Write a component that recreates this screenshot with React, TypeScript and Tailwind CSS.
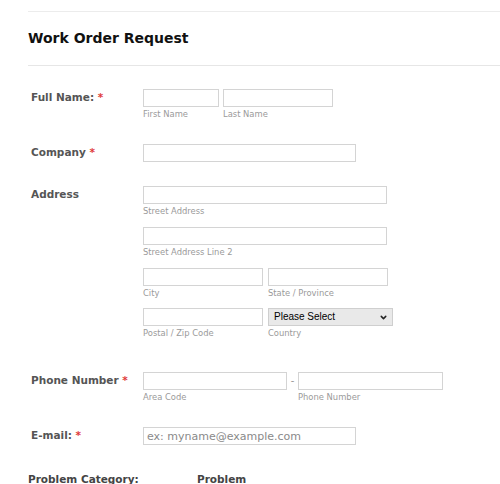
import { ChevronDown } from 'lucide-react'

const font = { fontFamily: '"DejaVu Sans", sans-serif' }

function Field({ w, placeholder }: { w: string; placeholder?: string }) {
  return (
    <input
      type="text"
      placeholder={placeholder}
      className={`block ${w} h-[18px] border border-[#d4d4d4] bg-white px-[3px] text-[11px] leading-[16px] text-[#333] placeholder:text-[#8a8a8a] outline-none`}
    />
  )
}

function Sub({ children }: { children: React.ReactNode }) {
  return <div className="mt-[1px] text-[8.4px] leading-[12px] text-[#9a9a9a]">{children}</div>
}

function Label({ text, required }: { text: string; required?: boolean }) {
  return (
    <div className="w-[115px] shrink-0 pl-[3px] pt-[1px] text-[10.5px] font-bold leading-[14px] text-[#555]">
      {text}
      {required && <span className="text-[#e03b3b]"> *</span>}
    </div>
  )
}

export default function App() {
  return (
    <div className="min-h-screen bg-white pl-[28px] text-[12px] leading-[16px]" style={font}>
      <div className="pt-[11px]">
        <div className="border-t border-[#ececec]" />
        <h1 className="h-[53px] pt-[16px] text-[14px] font-bold leading-[20px] text-[#111]">
          Work Order Request
        </h1>
        <div className="border-t border-[#e6e6e6]" />
      </div>

      {/* Full name */}
      <div className="mt-[23px] flex">
        <Label text="Full Name:" required />
        <div className="flex gap-[4px]">
          <div>
            <Field w="w-[76px]" />
            <Sub>First Name</Sub>
          </div>
          <div>
            <Field w="w-[110px]" />
            <Sub>Last Name</Sub>
          </div>
        </div>
      </div>

      {/* Company */}
      <div className="mt-[24px] flex">
        <Label text="Company" required />
        <Field w="w-[213px]" />
      </div>

      {/* Address */}
      <div className="mt-[24px] flex">
        <Label text="Address" />
        <div className="flex flex-col gap-[10px]">
          <div>
            <Field w="w-[244px]" />
            <Sub>Street Address</Sub>
          </div>
          <div>
            <Field w="w-[244px]" />
            <Sub>Street Address Line 2</Sub>
          </div>
          <div className="flex gap-[5px]">
            <div>
              <Field w="w-[120px]" />
              <Sub>City</Sub>
            </div>
            <div>
              <Field w="w-[120px]" />
              <Sub>State / Province</Sub>
            </div>
          </div>
          <div className="-mt-[1px] flex gap-[5px]">
            <div>
              <Field w="w-[120px]" />
              <Sub>Postal / Zip Code</Sub>
            </div>
            <div>
              <div className="relative h-[18px] w-[125px] border border-[#cfcfcf] bg-[#e9e9e9]">
                <select
                  className="block h-[16px] w-full appearance-none bg-transparent py-0 pl-[5px] text-[10px] leading-[16px] text-black outline-none"
                  style={{ fontFamily: '"Liberation Sans", Arial, sans-serif' }}
                >
                  <option>Please Select</option>
                </select>
                <ChevronDown
                  className="pointer-events-none absolute right-[4px] top-[4px] h-[9px] w-[9px] text-[#222]"
                  strokeWidth={4}
                />
              </div>
              <Sub>Country</Sub>
            </div>
          </div>
        </div>
      </div>

      {/* Phone */}
      <div className="mt-[33px] flex">
        <Label text="Phone Number" required />
        <div className="flex">
          <div>
            <Field w="w-[144px]" />
            <Sub>Area Code</Sub>
          </div>
          <div className="w-[11px] text-center text-[10px] leading-[18px] text-[#999]">-</div>
          <div>
            <Field w="w-[145px]" />
            <Sub>Phone Number</Sub>
          </div>
        </div>
      </div>

      {/* Email */}
      <div className="mt-[24px] flex">
        <Label text="E-mail:" required />
        <Field w="w-[213px]" placeholder="ex: myname@example.com" />
      </div>

      {/* Problem */}
      <div className="mt-[27px] flex text-[10.5px] font-bold leading-[14px] text-[#444]">
        <div className="w-[169px]">Problem Category:</div>
        <div>Problem</div>
      </div>
    </div>
  )
}
